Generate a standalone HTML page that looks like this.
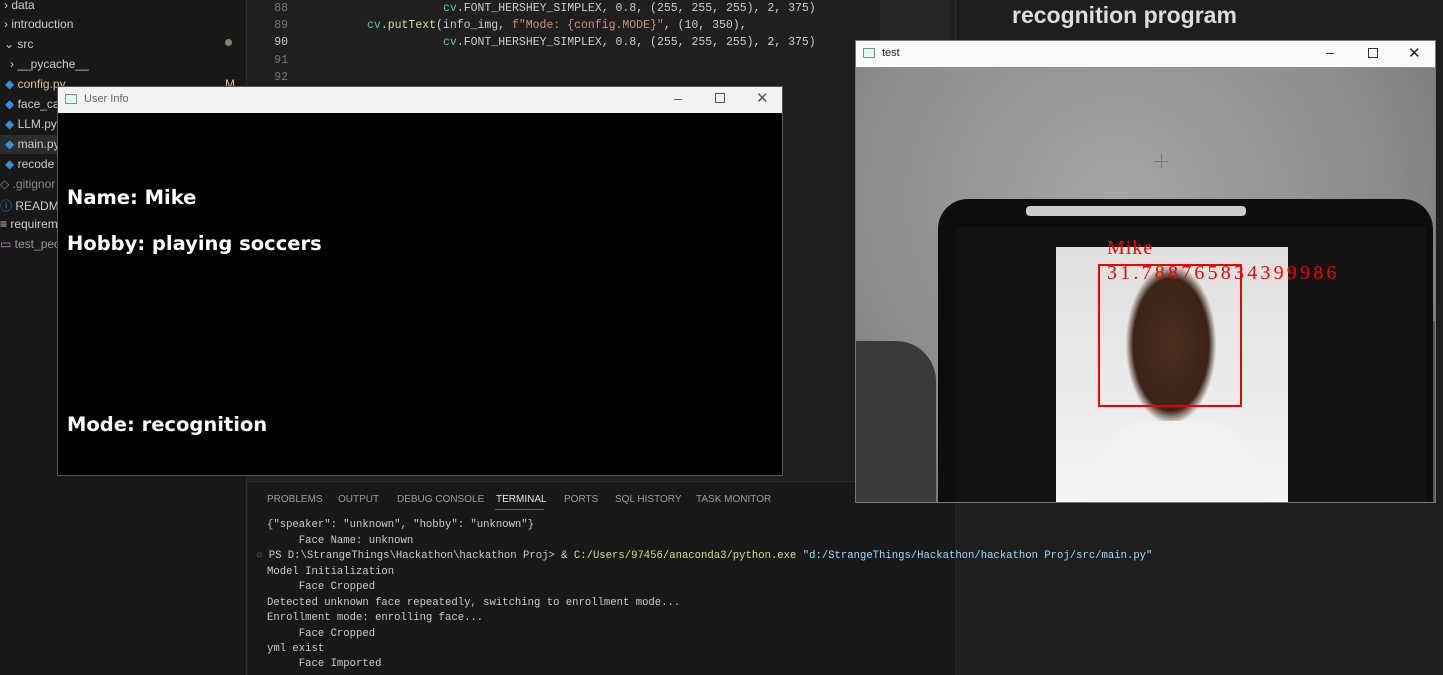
<!DOCTYPE html><html><head><style>
*{margin:0;padding:0;box-sizing:border-box}
body{width:1443px;height:675px;background:#1f1f1f;position:relative;overflow:hidden;font-family:"Liberation Sans",sans-serif;color:#ccc}
.a{position:absolute}
.side{left:0;top:0;width:247px;height:675px;background:#181818;border-right:1px solid #2b2b2b}
.side div{position:absolute;font-size:12px;color:#ccc;white-space:nowrap}
.mono{font-family:"Liberation Mono",monospace}
.ln{font-size:11.5px;color:#6e7681;width:40px;text-align:right}
.term div{position:absolute;font-family:"Liberation Mono",monospace;font-size:10.6px;color:#cccccc;white-space:pre}
.tab{position:absolute;top:494px;font-size:10px;color:#9d9d9d}
.win{background:#000;border:1px solid #555}
.tb{position:absolute;left:0;top:0;right:0;background:#f3f3f3;font-size:11px;color:#666}
.cv{position:absolute;color:#fff;font-weight:bold;font-size:19.5px;font-family:"DejaVu Sans",sans-serif}
</style></head><body>
<div class="a side">
<div style="left:4px;top:-2px">› data</div>
<div style="left:4px;top:17px">› introduction</div>
<div style="left:4px;top:37px">⌄ src</div>
<div style="left:225px;top:39px;width:7px;height:7px;border-radius:50%;background:#8a8070"></div>
<div style="left:10px;top:57px">› __pycache__</div>
<div style="left:5px;top:77px;color:#e2c08d"><span style="color:#3b8fd1">◆</span> config.py</div>
<div style="left:225px;top:77px;color:#e2c08d">M</div>
<div style="left:5px;top:97px"><span style="color:#3b8fd1">◆</span> face_ca</div>
<div style="left:5px;top:117px"><span style="color:#3b8fd1">◆</span> LLM.py</div>
<div style="left:0;top:135px;width:246px;height:19px;background:#2a2d2e"></div>
<div style="left:5px;top:137px"><span style="color:#3b8fd1">◆</span> main.py</div>
<div style="left:5px;top:157px"><span style="color:#3b8fd1">◆</span> recode</div>
<div style="left:0;top:177px;color:#888">◇ .gitignor</div>
<div style="left:0;top:197px"><span style="color:#3b8fd1">ⓘ</span> READMI</div>
<div style="left:0;top:217px">≡ requirem</div>
<div style="left:0;top:237px;color:#999"><span style="color:#b180d7">▭</span> test_peo</div>
</div>
<div class="a ln mono" style="left:248px;top:2px">88</div>
<div class="a ln mono" style="left:248px;top:19px">89</div>
<div class="a ln mono" style="left:248px;top:36px;color:#ccc">90</div>
<div class="a ln mono" style="left:248px;top:54px">91</div>
<div class="a ln mono" style="left:248px;top:71px">92</div>
<div class="a mono" style="left:443px;top:2px;font-size:11.5px;white-space:pre;color:#ccc"><span style="color:#4ec9b0">cv</span>.FONT_HERSHEY_SIMPLEX, 0.8, (255, 255, 255), 2, 375)</div>
<div class="a mono" style="left:367px;top:19px;font-size:11.5px;white-space:pre;color:#ccc"><span style="color:#4ec9b0">cv</span>.<span style="color:#dcdcaa">putText</span>(info_img, <span style="color:#ce9178">f"Mode: {config.MODE}"</span>, (10, 350),</div>
<div class="a mono" style="left:443px;top:36px;font-size:11.5px;white-space:pre;color:#ccc"><span style="color:#4ec9b0">cv</span>.FONT_HERSHEY_SIMPLEX, 0.8, (255, 255, 255), 2, 375)</div>
<div class="a" style="left:880px;top:0;width:70px;height:40px;background:#262626"></div>
<div class="a" style="left:955px;top:0;width:488px;height:675px;background:#1e1e1e;border-left:1px solid #2b2b2b"></div>
<div class="a" style="left:1012px;top:2px;font-size:23px;font-weight:bold;color:#ddd">recognition program</div>
<div class="a" style="left:248px;top:481px;width:707px;height:194px;background:#181818;border-top:1px solid #2b2b2b"></div>
<div class="tab" style="left:267px">PROBLEMS</div><div class="tab" style="left:338px">OUTPUT</div><div class="tab" style="left:397px">DEBUG CONSOLE</div>
<div class="tab" style="left:496px;color:#e7e7e7">TERMINAL</div><div class="a" style="left:495px;top:509px;width:49px;height:1px;background:#0078d4"></div>
<div class="tab" style="left:564px">PORTS</div><div class="tab" style="left:615px">SQL HISTORY</div><div class="tab" style="left:696px">TASK MONITOR</div>
<div class="term">
<div style="left:267px;top:519px">{"speaker": "unknown", "hobby": "unknown"}</div>
<div style="left:267px;top:535px">     Face Name: unknown</div>
<div style="left:256px;top:550px"><span style="color:#777">○</span> PS D:\StrangeThings\Hackathon\hackathon Proj&gt; &amp; <span style="color:#dcdc8b">C:/Users/97456/anaconda3/python.exe</span> <span style="color:#9cdcfe">"d:/StrangeThings/Hackathon/hackathon Proj/src/main.py"</span></div>
<div style="left:267px;top:566px">Model Initialization</div>
<div style="left:267px;top:581px">     Face Cropped</div>
<div style="left:267px;top:597px">Detected unknown face repeatedly, switching to enrollment mode...</div>
<div style="left:267px;top:612px">Enrollment mode: enrolling face...</div>
<div style="left:267px;top:628px">     Face Cropped</div>
<div style="left:267px;top:643px">yml exist</div>
<div style="left:267px;top:658px">     Face Imported</div>
</div>
<!-- user info -->
<div class="a win" style="left:57px;top:86px;width:726px;height:390px">
<div class="tb" style="height:26px"><span style="position:absolute;left:7px;top:7px;width:12px;height:10px;border:1px solid #889;background:#dfe"></span><span style="position:absolute;left:26px;top:6px">User Info</span>
<span style="position:absolute;left:616px;top:3px;font-size:14px;color:#555">–</span><span style="position:absolute;left:657px;top:6px;width:10px;height:10px;border:1px solid #555"></span><span style="position:absolute;left:698px;top:2px;font-size:15px;color:#555">✕</span></div>
<div class="cv" style="left:9px;top:99px">Name: Mike</div>
<div class="cv" style="left:9px;top:145px">Hobby: playing soccers</div>
<div class="cv" style="left:9px;top:326px">Mode: recognition</div>
</div>
<!-- test cam -->
<div class="a" style="left:855px;top:40px;width:581px;height:463px;border:1px solid #777;background:#8a8c8c;overflow:hidden">
<div class="tb" style="height:26px;background:#fafafa;color:#222"><span style="position:absolute;left:7px;top:7px;width:12px;height:10px;border:1px solid #889;background:#dfe"></span><span style="position:absolute;left:26px;top:6px">test</span>
<span style="position:absolute;left:470px;top:3px;font-size:14px">–</span><span style="position:absolute;left:512px;top:7px;width:10px;height:10px;border:1px solid #333"></span><span style="position:absolute;left:552px;top:3px;font-size:15px">✕</span></div>
<div class="a" style="left:0;top:27px;width:581px;height:436px;background:radial-gradient(ellipse at 45% 30%,#a4a6a5,#8a8c8b 60%,#6a6c6c)"></div>
<div class="a" style="left:298px;top:120px;width:14px;height:1px;background:#777"></div><div class="a" style="left:305px;top:113px;width:1px;height:14px;background:#777"></div>
<div class="a" style="left:0;top:300px;width:80px;height:165px;background:#3a3a3a;border-radius:0 40px 0 0"></div>
<div class="a" style="left:540px;top:280px;width:45px;height:185px;background:#5a5856"></div>
<div class="a" style="left:82px;top:158px;width:495px;height:320px;background:#0d0d0e;border-radius:30px 30px 0 0"></div>
<div class="a" style="left:170px;top:165px;width:220px;height:10px;background:#c9ccce;border-radius:4px"></div>
<div class="a" style="left:100px;top:186px;width:470px;height:280px;background:#121314"></div>
<div class="a" style="left:200px;top:206px;width:232px;height:260px;background:linear-gradient(#e0e0de,#f4f4f2)"></div>
<div class="a" style="left:245px;top:200px;width:140px;height:230px;background:radial-gradient(ellipse 45% 48% at 50% 45%,#4a2e20 0%,#3a2418 60%,transparent 72%)"></div>
<div class="a" style="left:230px;top:380px;width:180px;height:90px;background:#f2f1ef;border-radius:70px 70px 0 0"></div>
<div class="a" style="left:242px;top:223px;width:144px;height:143px;border:2px solid #e00"></div>
<div class="a" style="left:251px;top:196px;font-family:'Liberation Serif',serif;font-size:20px;color:#e00;letter-spacing:1px">Mike</div>
<div class="a" style="left:251px;top:221px;font-family:'Liberation Serif',serif;font-size:20px;color:#e00;letter-spacing:3.2px">31.788765834399986</div>
</div>
</body></html>
